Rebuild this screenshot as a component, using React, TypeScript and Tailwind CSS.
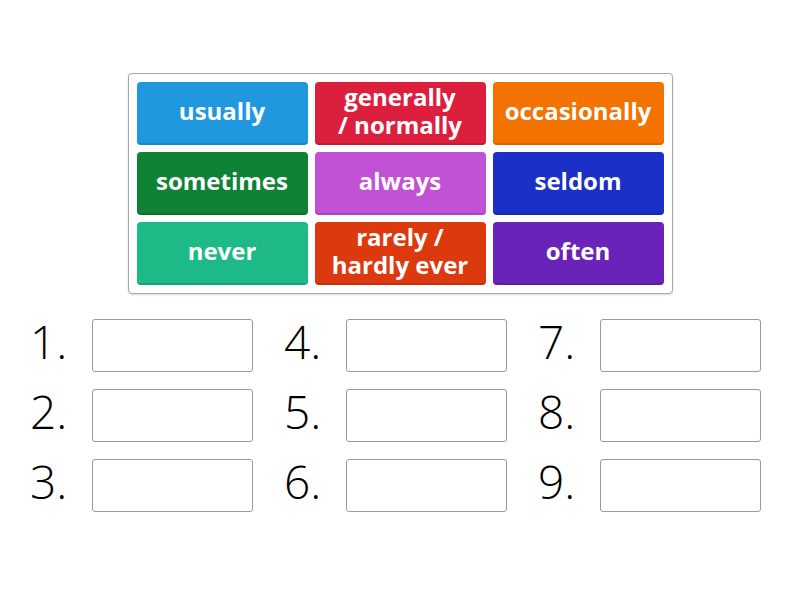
import React from 'react';

const tiles = [
  { lines: ['usually'], color: 'bg-[#1f98e0]' },
  { lines: ['generally', '/ normally'], color: 'bg-[#dc1f3d]' },
  { lines: ['occasionally'], color: 'bg-[#f47200]' },
  { lines: ['sometimes'], color: 'bg-[#0f8236]' },
  { lines: ['always'], color: 'bg-[#c152d6]' },
  { lines: ['seldom'], color: 'bg-[#1a30c6]' },
  { lines: ['never'], color: 'bg-[#1db986]' },
  { lines: ['rarely /', 'hardly ever'], color: 'bg-[#dc3a0e]' },
  { lines: ['often'], color: 'bg-[#6a23b8]' },
];

const numbers = [1, 4, 7, 2, 5, 8, 3, 6, 9];

export default function App() {
  return (
    <div className="w-[800px] h-[600px] bg-white pt-[73px] font-['Open_Sans',sans-serif]">
      {/* word bank */}
      <div className="mx-auto w-[545px] rounded-[4px] border border-[#a8a8a8] bg-white p-[8px] shadow-[0_1px_2px_rgba(0,0,0,0.15)]">
        <div className="grid grid-cols-3 gap-[7px]">
          {tiles.map((t) => (
            <div
              key={t.lines.join(' ')}
              className={`${t.color} flex h-[63px] flex-col items-center justify-center rounded-[4px] pb-[5px] text-center text-[24px] font-bold leading-[28px] whitespace-nowrap text-white shadow-[inset_0_-2px_0_rgba(0,0,0,0.12)]`}
            >
              {t.lines.map((l) => (
                <span key={l}>{l}</span>
              ))}
            </div>
          ))}
        </div>
      </div>

      {/* answer slots */}
      <div className="ml-[30px] mt-[25px] grid w-[762px] grid-cols-[254px_254px_254px] gap-y-[17px]">
        {numbers.map((n) => (
          <div key={n} className="flex items-start">
            <span className="w-[62px] text-[46px] font-light leading-[45px] text-black">{n}.</span>
            <div className="h-[53px] w-[161px] rounded-[3px] border border-[#9a9a9a] bg-white" />
          </div>
        ))}
      </div>
    </div>
  );
}
